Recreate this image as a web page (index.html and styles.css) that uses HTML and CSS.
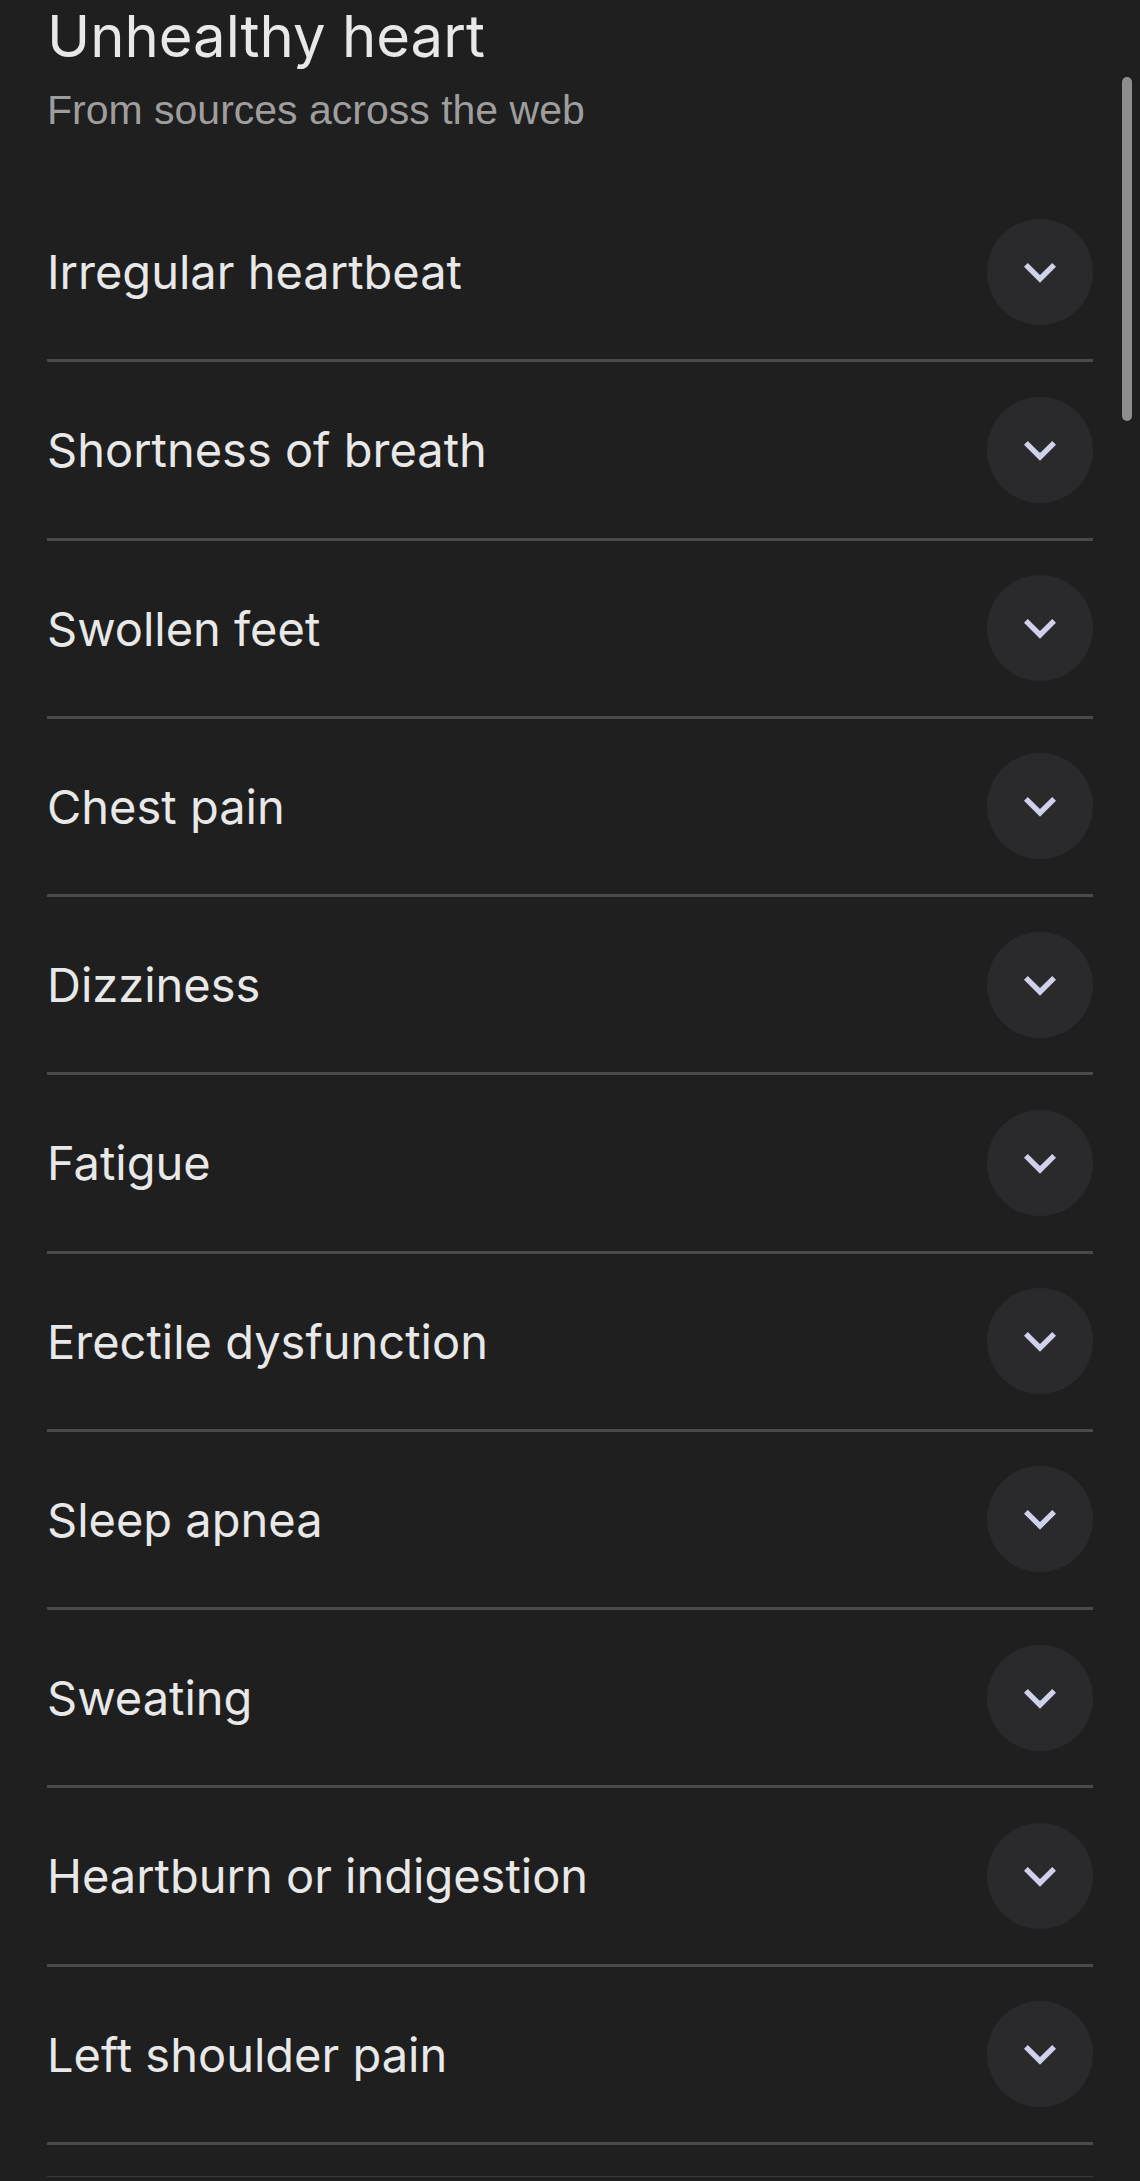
FILE: index.html
```html
<!DOCTYPE html>
<html lang="en">

<head>
    <meta charset="UTF-8">
    <meta name="viewport" content="width=device-width, initial-scale=1.0">
    <title>Unhealthy heart</title>
    <link rel="stylesheet" href="styles.css">
</head>

<body>
    <div id="panel">
        <h1 class="title">Unhealthy heart</h1>
        <p class="sub">From sources across the web</p>

        <div class="list">
            <div class="row"><span class="label">Irregular heartbeat</span><button class="more"><svg viewBox="0 0 24 24"><path d="M16.59 8.59L12 13.17 7.41 8.59 6 10l6 6 6-6z"/></svg></button></div>
            <div class="row"><span class="label">Shortness of breath</span><button class="more"><svg viewBox="0 0 24 24"><path d="M16.59 8.59L12 13.17 7.41 8.59 6 10l6 6 6-6z"/></svg></button></div>
            <div class="row"><span class="label">Swollen feet</span><button class="more"><svg viewBox="0 0 24 24"><path d="M16.59 8.59L12 13.17 7.41 8.59 6 10l6 6 6-6z"/></svg></button></div>
            <div class="row"><span class="label">Chest pain</span><button class="more"><svg viewBox="0 0 24 24"><path d="M16.59 8.59L12 13.17 7.41 8.59 6 10l6 6 6-6z"/></svg></button></div>
            <div class="row"><span class="label">Dizziness</span><button class="more"><svg viewBox="0 0 24 24"><path d="M16.59 8.59L12 13.17 7.41 8.59 6 10l6 6 6-6z"/></svg></button></div>
            <div class="row"><span class="label">Fatigue</span><button class="more"><svg viewBox="0 0 24 24"><path d="M16.59 8.59L12 13.17 7.41 8.59 6 10l6 6 6-6z"/></svg></button></div>
            <div class="row"><span class="label">Erectile dysfunction</span><button class="more"><svg viewBox="0 0 24 24"><path d="M16.59 8.59L12 13.17 7.41 8.59 6 10l6 6 6-6z"/></svg></button></div>
            <div class="row"><span class="label">Sleep apnea</span><button class="more"><svg viewBox="0 0 24 24"><path d="M16.59 8.59L12 13.17 7.41 8.59 6 10l6 6 6-6z"/></svg></button></div>
            <div class="row"><span class="label">Sweating</span><button class="more"><svg viewBox="0 0 24 24"><path d="M16.59 8.59L12 13.17 7.41 8.59 6 10l6 6 6-6z"/></svg></button></div>
            <div class="row"><span class="label">Heartburn or indigestion</span><button class="more"><svg viewBox="0 0 24 24"><path d="M16.59 8.59L12 13.17 7.41 8.59 6 10l6 6 6-6z"/></svg></button></div>
            <div class="row"><span class="label">Left shoulder pain</span><button class="more"><svg viewBox="0 0 24 24"><path d="M16.59 8.59L12 13.17 7.41 8.59 6 10l6 6 6-6z"/></svg></button></div>
        </div>
        <div class="foot"></div>
    </div>
    <div class="scroll"></div>
</body>

</html>
```

FILE: styles.css
```css
* {
    box-sizing: border-box;
    margin: 0;
    padding: 0;
}

body {
    background-color: #1f1f1f;
    overflow: hidden;
}

#panel {
    padding: 0 47px;
}

.title {
    font-family: Inter, Roboto, sans-serif;
    font-size: 58px;
    font-weight: 400;
    line-height: 68px;
    margin-top: 2px;
    color: #e8e8e8;
}

.sub {
    font-family: 'Liberation Sans', Arial, sans-serif;
    font-size: 41px;
    line-height: 46px;
    margin-top: 17px;
    color: #9e9e9e;
}

.list {
    margin-top: 51px;
}

.row {
    display: flex;
    align-items: center;
    justify-content: space-between;
    height: 178.25px;
    border-bottom: 3px solid #4a4a4a;
}

.label {
    font-family: Inter, Roboto, sans-serif;
    font-size: 47px;
    color: #e8e8e8;
}

.more {
    width: 106px;
    height: 106px;
    border: none;
    border-radius: 50%;
    background-color: #2a2a2d;
    display: flex;
    align-items: center;
    justify-content: center;
}

.more svg {
    width: 64px;
    height: 64px;
    fill: #d0d1ea;
}

.foot {
    margin-top: 31px;
    border-top: 1px solid #3a3a3f;
    height: 10px;
}

.scroll {
    position: fixed;
    top: 77px;
    right: 8px;
    width: 10px;
    height: 344px;
    border-radius: 5px;
    background-color: #8e8e8e;
}
```
